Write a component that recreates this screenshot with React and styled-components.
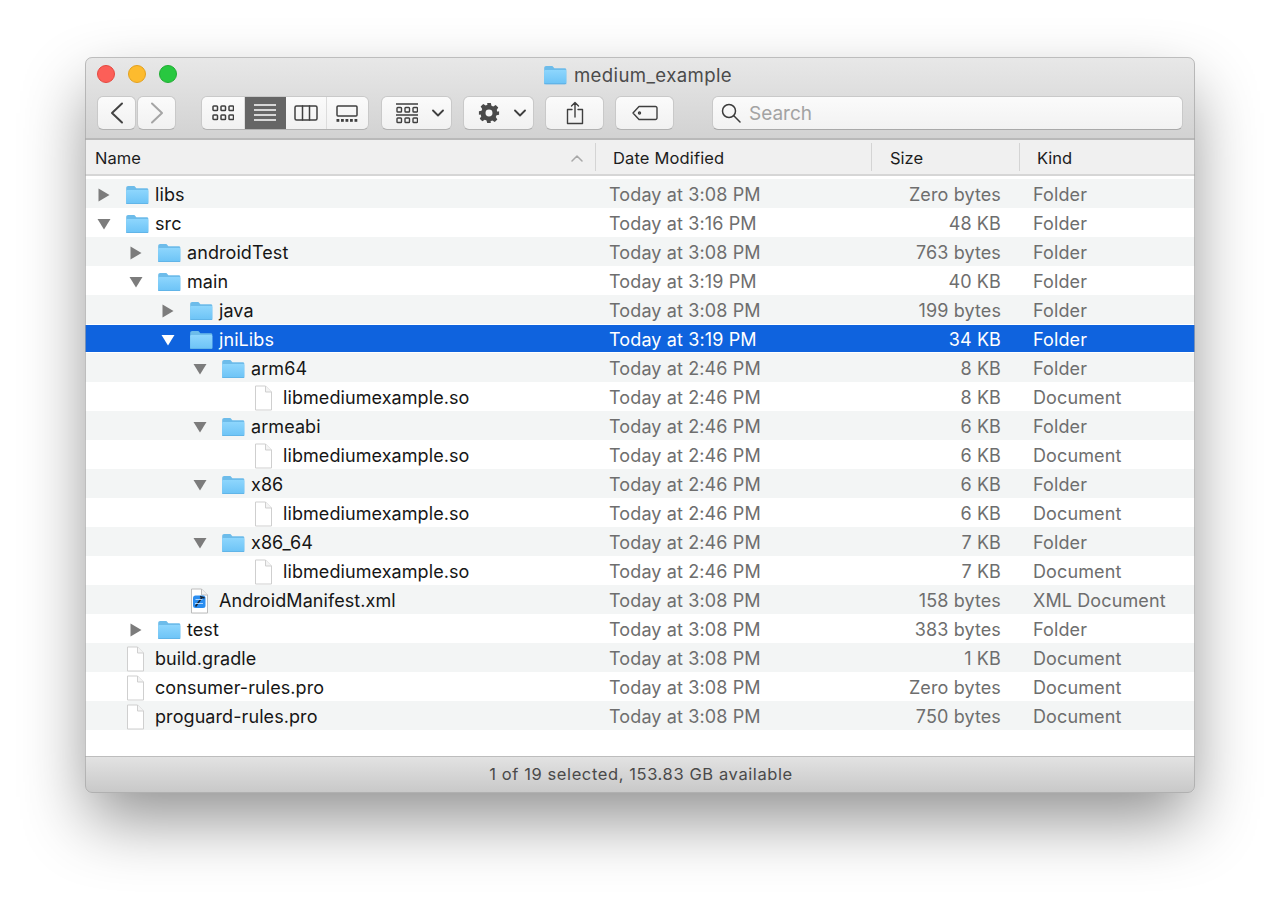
import React from "react";
import styled, { createGlobalStyle } from "styled-components";

const Global = createGlobalStyle`
  html, body { margin: 0; padding: 0; background: #fff; }
  body { font-family: Inter, "Noto Sans", "Liberation Sans", sans-serif; -webkit-font-smoothing: antialiased; }
`;

const Page = styled.div`
  width: 1280px;
  height: 905px;
  padding: 57px 85px 0;
  box-sizing: border-box;
  overflow: hidden;
`;

const Win = styled.div`
  width: 1110px;
  height: 736px;
  display: flex;
  flex-direction: column;
  border-radius: 7px;
  overflow: hidden;
  background: #fff;
  outline: 1px solid rgba(165, 165, 165, 0.7);
  outline-offset: -1px;
  box-shadow: 0 30px 66px -4px rgba(0, 0, 0, 0.44);
`;

const TitleBar = styled.div`
  height: 83px;
  flex: none;
  box-sizing: border-box;
  background: linear-gradient(#e8e8e8, #d2d2d2);
  border-bottom: 2px solid #b9b9b9;
  padding: 8px 12px 0;
  display: flex;
  flex-direction: column;
  box-shadow: inset 0 1px 0 #f4f4f4;
`;

const TitleRow = styled.div`
  height: 31px;
  display: flex;
  align-items: flex-start;
  position: relative;
  justify-content: center;
  gap: 7px;
  padding-right: 5px;
`;

const Lights = styled.div`
  position: absolute;
  left: 0;
  top: 0;
  height: 20px;
  display: flex;
  gap: 13px;
`;

const Light = styled.span`
  width: 18px;
  height: 18px;
  border-radius: 50%;
  box-sizing: border-box;
  background: ${(p) => p.$c};
  border: 1px solid ${(p) => p.$b};
`;

const TitleText = styled.span`
  font-size: 18.6px;
  line-height: 21px;
  color: #4b4b4b;
  letter-spacing: 0.38px;
`;

const Tools = styled.div`
  display: flex;
  height: 34px;
`;

const Btn = styled.div`
  width: ${(p) => p.$w}px;
  height: 34px;
  margin-left: ${(p) => p.$ml || 0}px;
  padding-left: ${(p) => p.$pl || 0}px;
  box-sizing: border-box;
  border-radius: 6px;
  background: linear-gradient(#fbfbfb, #f1f1f1);
  border: 1px solid #c9c9c9;
  border-bottom-color: #b2b2b2;
  display: flex;
  align-items: center;
  justify-content: ${(p) => (p.$pl ? "flex-start" : "center")};
  gap: ${(p) => p.$gap || 0}px;
  flex: none;
`;

const Segments = styled.div`
  display: flex;
  margin-left: 25px;
  width: 168px;
  height: 34px;
  box-sizing: border-box;
  border-radius: 6px;
  overflow: hidden;
  border: 1px solid #c9c9c9;
  border-bottom-color: #b2b2b2;
  flex: none;
`;

const Seg = styled.div`
  width: ${(p) => p.$w}px;
  display: flex;
  align-items: center;
  justify-content: center;
  box-sizing: border-box;
  background: ${(p) => (p.$on ? "#666" : "linear-gradient(#fbfbfb, #f1f1f1)")};
  border-right: 1px solid ${(p) => (p.$on ? "#666" : "#dcdcdc")};
  &:last-child { border-right: 0; }
`;

const SearchBox = styled.div`
  width: 471px;
  height: 34px;
  margin-left: 38px;
  box-sizing: border-box;
  border-radius: 6px;
  background: linear-gradient(#fbfbfb, #f2f2f2);
  border: 1px solid #c9c9c9;
  border-bottom-color: #a9a9a9;
  display: flex;
  align-items: center;
  padding-left: 8px;
  gap: 8px;
  font-size: 19px;
  color: #a3a3a3;
  flex: none;
`;

const Columns = "511px 276px 148px 1fr";

const Header = styled.div`
  height: 36px;
  flex: none;
  box-sizing: border-box;
  background: #f0f0f0;
  border-bottom: 2px solid #d6d6d6;
  display: grid;
  grid-template-columns: ${Columns};
  font-size: 16.5px;
  color: #1c1c1c;
`;

const HeadCell = styled.div`
  display: flex;
  align-items: center;
  justify-content: space-between;
  padding: 2px 12px 0 ${(p) => p.$pl}px;
  height: 28px;
  margin-top: 3px;
  box-sizing: border-box;
  letter-spacing: ${(p) => p.$ls || 0}px;
  border-right: ${(p) => (p.$last ? "0" : "1px solid #d4d4d4")};
`;

const List = styled.div`
  flex: 1;
  padding-top: 3px;
  background: #fff;
`;

const RowEl = styled.div`
  height: 29px;
  box-sizing: border-box;
  padding-top: 2px;
  display: grid;
  grid-template-columns: ${Columns};
  align-items: center;
  font-size: 18px;
  letter-spacing: 0.12px;
  background: ${(p) => (p.$sel ? "#0f63de" : p.$odd ? "#f3f5f5" : "#fff")};
  box-shadow: ${(p) => (p.$sel ? "inset 0 1px 0 #fff, inset 0 -1px 0 #fff" : "none")};
  color: ${(p) => (p.$sel ? "#fff" : "#6e6e6e")};
`;

const NameCell = styled.div`
  display: flex;
  align-items: center;
  padding-left: ${(p) => 12 + p.$depth * 32}px;
  letter-spacing: 0.08px;
  color: ${(p) => (p.$sel ? "#fff" : "#161616")};
`;

const Disclosure = styled.span`
  width: 28px;
  flex: none;
  display: flex;
`;

const IconSlot = styled.span`
  width: 30px;
  flex: none;
  display: flex;
  align-items: center;
`;

const DateCell = styled.div`
  padding-left: 13px;
`;

const SizeCell = styled.div`
  text-align: right;
  padding-right: 19px;
`;

const KindCell = styled.div`
  padding-left: 13px;
`;

const Status = styled.div`
  height: 37px;
  flex: none;
  box-sizing: border-box;
  background: linear-gradient(#e2e2e2, #c8c8c8);
  border-top: 1px solid #bdbdbd;
  padding: 0 0 2px 2px;
  display: flex;
  align-items: center;
  justify-content: center;
  font-size: 16.5px;
  letter-spacing: 0.6px;
  color: #4a4a4a;
`;

const Stroke = ({ w, h, children, color = "#3f3f3f", sw = 1.5 }) => (
  <svg width={w} height={h} viewBox={`0 0 ${w} ${h}`} fill="none" stroke={color} strokeWidth={sw} strokeLinecap="round" strokeLinejoin="round">
    {children}
  </svg>
);

const Folder = ({ size = 24 }) => (
  <svg width={size} height={size * 0.82} viewBox="0 0 24 20">
    <defs>
      <linearGradient id="fb" x1="0" y1="0" x2="0" y2="1">
        <stop offset="0" stopColor="#8ed6fd" />
        <stop offset="1" stopColor="#6cc3f6" />
      </linearGradient>
    </defs>
    <path d="M1 3.2C1 1.8 1.8 1 3 1h5.5c1 0 1.4.4 2 1.2L11.4 3.4H22c.8 0 1.5.6 1.5 1.5v13c0 .9-.7 1.6-1.6 1.6H2.6C1.7 19.5 1 18.8 1 17.900z" fill="#6dbcea" />
    <path d="M1 6.300c0-.8.6-1.300 1.400-1.300H22c.8 0 1.500.5 1.500 1.300V18c0 .8-.7 1.400-1.500 1.400H2.500C1.600 19.400 1 18.800 1 18z" fill="url(#fb)" />
    <rect x="1" y="18.600" width="22.500" height="0.900" fill="#5daee2" />
  </svg>
);

const Doc = () => (
  <svg width="20" height="26" viewBox="0 0 20 26">
    <path d="M2.500 1h10L18.500 7v18h-16z" fill="#fff" stroke="#cfcfcf" />
    <path d="M12.500 1v6h6" fill="#f4f4f4" stroke="#cfcfcf" />
  </svg>
);

const Xcode = () => (
  <svg width="20" height="26" viewBox="0 0 20 26">
    <path d="M2.500 1h10L18.500 7v18h-16z" fill="#fff" stroke="#bdbdbd" />
    <path d="M12.500 1v6h6" fill="#f2f2f2" stroke="#bdbdbd" />
    <rect x="4" y="7.500" width="12.500" height="12.500" rx="2.500" fill="#2a8df0" />
    <path d="M6.500 18.500L13 9.500" stroke="#1a2430" strokeWidth="1.500" />
    <path d="M11 8.500l4.500 1.500" stroke="#1a2430" strokeWidth="1.500" />
    <path d="M6.500 11.500h7M6 15.500h8" stroke="#bfe0ff" strokeWidth="0.900" />
  </svg>
);

const Tri = ({ open, sel }) => {
  const c = sel ? "#fff" : "#7c7c7c";
  return open ? (
    <svg width="14" height="12" viewBox="0 0 14 12"><path d="M0.500 1h13L7 11.500z" fill={c} /></svg>
  ) : (
    <svg width="14" height="14" viewBox="0 0 14 14"><path d="M1.500 0.500L12.500 7 1.500 13.500z" fill={c} /></svg>
  );
};

const GridDots = () => (
  <Stroke w={22} h={16} sw={1.500}>
    {[1, 9, 17].map((x) => [1, 10].map((y) => <rect key={x + "-" + y} x={x} y={y} width="4.500" height="4.500" rx="0.800" />))}
  </Stroke>
);

const ListLines = () => (
  <svg width="22" height="18" viewBox="0 0 22 18" stroke="#fff" strokeWidth="1.500">
    {[1, 6, 11, 16].map((y) => <line key={y} x1="0" x2="22" y1={y} y2={y} />)}
  </svg>
);

const ColsIcon = () => (
  <Stroke w={24} h={16} sw={1.500}>
    <rect x="1" y="1" width="22" height="14" rx="1.500" />
    <path d="M8.500 1v14M15.500 1v14" />
  </Stroke>
);

const GalleryIcon = () => (
  <svg width="22" height="17" viewBox="0 0 22 17" fill="none" stroke="#3f3f3f" strokeWidth="1.500">
    <rect x="1" y="1" width="20" height="10" rx="1" />
    {[0.500, 5, 9.500, 14, 18.500].map((x) => <rect key={x} x={x} y="14" width="2.800" height="2.800" fill="#3f3f3f" stroke="none" />)}
  </svg>
);

const GroupIcon = () => (
  <svg width="22" height="21" viewBox="0 0 22 21" fill="none" stroke="#3f3f3f" strokeWidth="1.400">
    <path d="M0 1h22M0 12h22" />
    {[1, 9, 17].map((x) => [4.500, 15].map((y) => <rect key={x + "-" + y} x={x} y={y} width="4.500" height="4.500" rx="0.800" />))}
  </svg>
);

const Chevron = () => (
  <Stroke w={12} h={8} sw={1.800}><path d="M1 1.500l5 5 5-5" /></Stroke>
);

const Gear = () => (
  <svg width="22" height="22" viewBox="0 0 24 24" fill="#4a4a4a">
    <path fillRule="evenodd" d="M10 1h4l.7 3.100 1.900.8 2.700-1.700 2.800 2.800-1.700 2.700.8 1.900L23 10.200v3.600l-2.800.7-.8 1.900 1.700 2.700-2.800 2.800-2.700-1.700-1.900.8L14 23h-4l-.7-2.800-1.900-.8-2.700 1.700-2.800-2.800 1.700-2.700-.8-1.900L1 13.800v-3.600l2.800-.7.8-1.900-1.700-2.700 2.800-2.800 2.700 1.700 1.900-.8zM12 8.200a3.800 3.800 0 100 7.600 3.800 3.800 0 000-7.600z" />
  </svg>
);

const Share = () => (
  <Stroke w={18} h={24} sw={1.400}>
    <path d="M6 8.500H1.500v14h15v-14H12M9 16V1.500M5.500 5L9 1.500 12.500 5" />
  </Stroke>
);

const Tag = () => (
  <Stroke w={26} h={16} sw={1.400}>
    <path d="M7 1.500h16.500a1.500 1.500 0 011.500 1.500v10a1.500 1.500 0 01-1.500 1.500H7L1 8z" />
    <circle cx="7.500" cy="8" r="1" />
  </Stroke>
);

const SearchIcon = () => (
  <Stroke w={20} h={20} sw={1.500} color="#3c3c3c">
    <circle cx="8" cy="8" r="6.500" /><path d="M12.800 12.800L19 19" />
  </Stroke>
);

const NavBack = ({ color }) => (
  <Stroke w={14} h={22} sw={2} color={color}><path d="M12 1.500L2 11l10 9.500" /></Stroke>
);
const NavFwd = ({ color }) => (
  <Stroke w={14} h={22} sw={2} color={color}><path d="M2 1.500L12 11 2 20.500" /></Stroke>
);

const rows = [
  [0, "r", "f", "libs", "3:08", "Zero bytes", "Folder"],
  [0, "o", "f", "src", "3:16", "48 KB", "Folder"],
  [1, "r", "f", "androidTest", "3:08", "763 bytes", "Folder"],
  [1, "o", "f", "main", "3:19", "40 KB", "Folder"],
  [2, "r", "f", "java", "3:08", "199 bytes", "Folder"],
  [2, "o", "f", "jniLibs", "3:19", "34 KB", "Folder"],
  [3, "o", "f", "arm64", "2:46", "8 KB", "Folder"],
  [4, "", "d", "libmediumexample.so", "2:46", "8 KB", "Document"],
  [3, "o", "f", "armeabi", "2:46", "6 KB", "Folder"],
  [4, "", "d", "libmediumexample.so", "2:46", "6 KB", "Document"],
  [3, "o", "f", "x86", "2:46", "6 KB", "Folder"],
  [4, "", "d", "libmediumexample.so", "2:46", "6 KB", "Document"],
  [3, "o", "f", "x86_64", "2:46", "7 KB", "Folder"],
  [4, "", "d", "libmediumexample.so", "2:46", "7 KB", "Document"],
  [2, "", "x", "AndroidManifest.xml", "3:08", "158 bytes", "XML Document"],
  [1, "r", "f", "test", "3:08", "383 bytes", "Folder"],
  [0, "", "d", "build.gradle", "3:08", "1 KB", "Document"],
  [0, "", "d", "consumer-rules.pro", "3:08", "Zero bytes", "Document"],
  [0, "", "d", "proguard-rules.pro", "3:08", "750 bytes", "Document"],
];

export default function App() {
  return (
    <Page>
      <Global />
      <Win>
        <TitleBar>
          <TitleRow>
            <Lights>
              <Light $c="#fc5f58" $b="#e5483f" />
              <Light $c="#fdbb2e" $b="#e3a11f" />
              <Light $c="#28c840" $b="#20ad33" />
            </Lights>
            <Folder size={24} />
            <TitleText>medium_example</TitleText>
          </TitleRow>
          <Tools>
            <Btn $w={39}><NavBack color="#444" /></Btn>
            <Btn $w={39} $ml={1}><NavFwd color="#a5a5a5" /></Btn>
            <Segments>
              <Seg $w={44}><GridDots /></Seg>
              <Seg $w={41} $on><ListLines /></Seg>
              <Seg $w={41}><ColsIcon /></Seg>
              <Seg $w={42}><GalleryIcon /></Seg>
            </Segments>
            <Btn $w={71} $ml={12} $pl={14} $gap={14}><GroupIcon /><Chevron /></Btn>
            <Btn $w={71} $ml={11} $pl={14} $gap={14}><Gear /><Chevron /></Btn>
            <Btn $w={59} $ml={11}><Share /></Btn>
            <Btn $w={59} $ml={11}><Tag /></Btn>
            <SearchBox><SearchIcon />Search</SearchBox>
          </Tools>
        </TitleBar>
        <Header>
          <HeadCell $pl={10}>
            Name
            <Stroke w={12} h={7} sw={1.500} color="#a8a8a8"><path d="M1 6l5-5 5 5" /></Stroke>
          </HeadCell>
          <HeadCell $pl={17} $ls={0.15}>Date Modified</HeadCell>
          <HeadCell $pl={18}>Size</HeadCell>
          <HeadCell $pl={17} $last>Kind</HeadCell>
        </Header>
        <List>
          {rows.map((r, i) => {
            const sel = r[3] === "jniLibs";
            return (
              <RowEl key={i} $odd={i % 2 === 0} $sel={sel}>
                <NameCell $depth={r[0]} $sel={sel}>
                  <Disclosure>{r[1] && <Tri open={r[1] === "o"} sel={sel} />}</Disclosure>
                  <IconSlot>{r[2] === "f" ? <Folder /> : r[2] === "d" ? <Doc /> : <Xcode />}</IconSlot>
                  {r[3]}
                </NameCell>
                <DateCell>Today at {r[4]} PM</DateCell>
                <SizeCell>{r[5]}</SizeCell>
                <KindCell>{r[6]}</KindCell>
              </RowEl>
            );
          })}
        </List>
        <Status>1 of 19 selected, 153.83 GB available</Status>
      </Win>
    </Page>
  );
}
